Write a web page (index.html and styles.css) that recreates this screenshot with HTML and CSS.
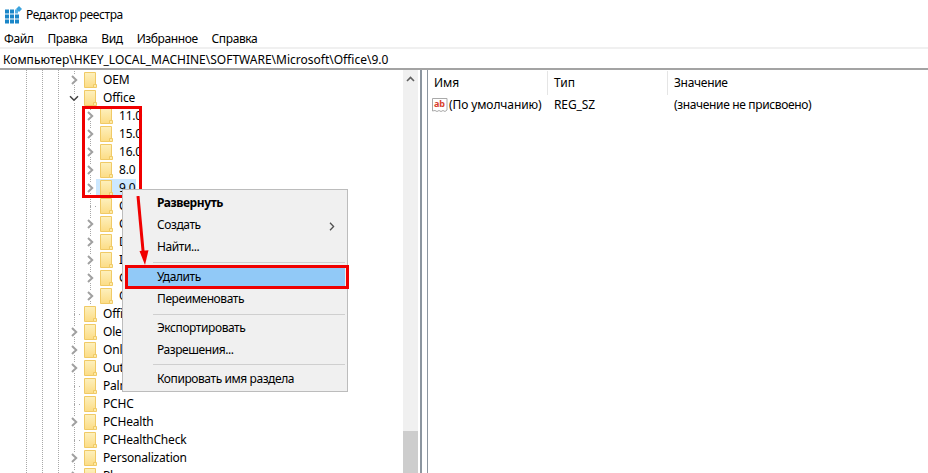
FILE: index.html
```html
<!DOCTYPE html>
<html lang="ru">
<head>
<meta charset="utf-8">
<title>Редактор реестра</title>
<link rel="stylesheet" href="styles.css">
</head>
<body>
<svg class="defs" width="0" height="0">
  <defs>
    <linearGradient id="fg" x1="0" y1="0" x2="0" y2="1">
      <stop offset="0" stop-color="#fdf0bd"/>
      <stop offset="1" stop-color="#fcdc85"/>
    </linearGradient>
    <symbol id="folder" viewBox="0 0 13 16">
      <path d="M.5.5h11v15H.5z" fill="url(#fg)" stroke="#f0ca66"/>
      <path d="M9.5 15.5v-3h3v3z" fill="#fdeaa8" stroke="#f0ca66"/>
    </symbol>
    <symbol id="chev" viewBox="0 0 7 10">
      <path d="M1 1l4.2 4L1 9" fill="none" stroke="#a0a0a0" stroke-width="2"/>
    </symbol>
    <symbol id="chevd" viewBox="0 0 10 7">
      <path d="M1 1.2l4 4 4-4" fill="none" stroke="#404040" stroke-width="1.5"/>
    </symbol>
  </defs>
</svg>
<div class="app">
  <header class="titlebar">
    <svg class="appicon" width="18" height="18" viewBox="0 0 18 18">
      <path d="M0 3.5h4v4H0zM5 3.5h4v4H5zM0 8.5h4v4H0zM5 8.5h4v4H5zM10 8.5h4v4h-4zM0 13.5h4v4H0zM5 13.5h4v4H5zM10 13.5h4v4h-4z" fill="#1a86c8"/>
      <path d="M10 3.5h3v4h-3z" fill="#56b0e4"/>
      <path d="M14 0l3 3-3 3-3-3z" fill="#3ba3de"/>
    </svg>
    <span>Редактор реестра</span>
  </header>
  <nav class="menubar">
    <span>Файл</span><span>Правка</span><span>Вид</span><span>Избранное</span><span>Справка</span>
  </nav>
  <div class="address">Компьютер\HKEY_LOCAL_MACHINE\SOFTWARE\Microsoft\Office\9.0</div>
  <main class="panes">
    <section class="treepane">
      <div class="tree">
        <div class="row l1"><svg class="chev"><use href="#chev"/></svg><svg class="folder"><use href="#folder"/></svg><span>OEM</span></div>
        <div class="row l1"><svg class="chevd"><use href="#chevd"/></svg><svg class="folder"><use href="#folder"/></svg><span>Office</span></div>
        <div class="row l2"><svg class="chev"><use href="#chev"/></svg><svg class="folder"><use href="#folder"/></svg><span>11.0</span></div>
        <div class="row l2"><svg class="chev"><use href="#chev"/></svg><svg class="folder"><use href="#folder"/></svg><span>15.0</span></div>
        <div class="row l2"><svg class="chev"><use href="#chev"/></svg><svg class="folder"><use href="#folder"/></svg><span>16.0</span></div>
        <div class="row l2"><svg class="chev"><use href="#chev"/></svg><svg class="folder"><use href="#folder"/></svg><span>8.0</span></div>
        <div class="row l2"><svg class="chev"><use href="#chev"/></svg><svg class="folder sel"><use href="#folder"/></svg><span class="seltext">9.0</span></div>
        <div class="row l2 leaf"><i class="dots"></i><svg class="folder"><use href="#folder"/></svg><span>Common</span></div>
        <div class="row l2"><svg class="chev"><use href="#chev"/></svg><svg class="folder"><use href="#folder"/></svg><span>Clients</span></div>
        <div class="row l2"><svg class="chev"><use href="#chev"/></svg><svg class="folder"><use href="#folder"/></svg><span>Delivery</span></div>
        <div class="row l2"><svg class="chev"><use href="#chev"/></svg><svg class="folder"><use href="#folder"/></svg><span>Infopath</span></div>
        <div class="row l2"><svg class="chev"><use href="#chev"/></svg><svg class="folder"><use href="#folder"/></svg><span>Groove</span></div>
        <div class="row l2"><svg class="chev"><use href="#chev"/></svg><svg class="folder"><use href="#folder"/></svg><span>Outlook</span></div>
        <div class="row l1 leaf"><i class="dots"></i><svg class="folder"><use href="#folder"/></svg><span>OfficeSoftware</span></div>
        <div class="row l1"><svg class="chev"><use href="#chev"/></svg><svg class="folder"><use href="#folder"/></svg><span>Ole</span></div>
        <div class="row l1"><svg class="chev"><use href="#chev"/></svg><svg class="folder"><use href="#folder"/></svg><span>Online</span></div>
        <div class="row l1"><svg class="chev"><use href="#chev"/></svg><svg class="folder"><use href="#folder"/></svg><span>Outlook</span></div>
        <div class="row l1 leaf"><i class="dots"></i><svg class="folder"><use href="#folder"/></svg><span>Palm</span></div>
        <div class="row l1 leaf"><i class="dots"></i><svg class="folder"><use href="#folder"/></svg><span>PCHC</span></div>
        <div class="row l1"><svg class="chev"><use href="#chev"/></svg><svg class="folder"><use href="#folder"/></svg><span>PCHealth</span></div>
        <div class="row l1 leaf"><i class="dots"></i><svg class="folder"><use href="#folder"/></svg><span>PCHealthCheck</span></div>
        <div class="row l1"><svg class="chev"><use href="#chev"/></svg><svg class="folder"><use href="#folder"/></svg><span>Personalization</span></div>
        <div class="row l1"><svg class="chev"><use href="#chev"/></svg><svg class="folder"><use href="#folder"/></svg><span>Phone</span></div>
      </div>
      <div class="scrollbar">
        <svg class="sbarrow" width="9" height="6" viewBox="0 0 9 6"><path d="M1 5l3.5-3.5L8 5" fill="none" stroke="#606060" stroke-width="1.6"/></svg>
        <div class="thumb"></div>
      </div>
    </section>
    <div class="splitter"></div>
    <section class="list">
      <div class="listhead">
        <div class="col c1">Имя</div>
        <div class="col c2">Тип</div>
        <div class="col c3">Значение</div>
      </div>
      <div class="listrow">
        <div class="c1 namecell">
          <svg class="ab" width="16" height="16" viewBox="0 0 16 16">
            <path d="M.5 1.5h14.5v11.5l-2 1.5-2-1-2 1-2-1-2 1-2-1-2.5.5z" fill="#fff" stroke="#a9a9a9"/>
            <text x="2" y="10" class="abtext">ab</text>
          </svg>
          <span>(По умолчанию)</span>
        </div>
        <div class="c2 regtype">REG_SZ</div>
        <div class="c3 regval">(значение не присвоено)</div>
      </div>
    </section>
  </main>

  <div class="redbox tree-mark"></div>
  <div class="ctx">
    <div class="ci strong">Развернуть</div>
    <div class="ci">Создать<svg class="sub" width="6" height="9" viewBox="0 0 6 9"><path d="M1 .8l3.6 3.7L1 8.2" fill="none" stroke="#505050" stroke-width="1.3"/></svg></div>
    <div class="ci short">Найти...</div>
    <div class="sep s1"></div>
    <div class="ci hot">Удалить</div>
    <div class="ci">Переименовать</div>
    <div class="sep s2"></div>
    <div class="ci">Экспортировать</div>
    <div class="ci">Разрешения...</div>
    <div class="sep s3"></div>
    <div class="ci">Копировать имя раздела</div>
  </div>
  <div class="redbox del-mark"></div>
  <svg class="arrow" width="30" height="80" viewBox="0 0 30 80">
    <path d="M7 0L12.500 60" stroke="#f00000" stroke-width="3" fill="none"/>
    <path d="M8.500 55l9-.8L14 69z" fill="#f00000"/>
  </svg>
</div>
</body>
</html>
```

FILE: styles.css
```css
* { box-sizing: border-box; }
html, body { margin: 0; height: 100%; overflow: hidden; background: #fff; }
body { font: 12px/16px "Noto Sans", sans-serif; color: #000; }
.defs { position: absolute; }
.app { position: relative; width: 928px; height: 473px; overflow: hidden; }

.titlebar { height: 28px; display: flex; align-items: center; padding: 2px 0 0 5px; gap: 3px; letter-spacing: -0.38px; }
.appicon { flex: none; }
.menubar { height: 19px; display: flex; align-items: center; gap: 14px; padding: 2px 0 0 4px; letter-spacing: -0.4px; }

.address { height: 23px; padding: 3px 0 0 3px; border-top: 2px solid #f0f0f0; border-bottom: 2px solid #a3a3a3; white-space: nowrap; line-height: 16px; }

.panes { display: flex; height: 403px; }
.treepane { width: 418px; flex: none; display: flex; overflow: hidden; }
.tree {
  flex: 1; min-width: 0; overflow: hidden; padding-top: 1px; letter-spacing: -0.2px;
  background-image:
    repeating-linear-gradient(#a8a8a8 0 1px, transparent 1px 2px),
    repeating-linear-gradient(#a8a8a8 0 1px, transparent 1px 2px),
    repeating-linear-gradient(#a8a8a8 0 1px, transparent 1px 2px);
  background-size: 1px 100%;
  background-repeat: no-repeat;
  background-position: 26px 0, 42px 0, 58px 0;
}
.row { height: 18px; display: flex; align-items: center; white-space: nowrap; position: relative; }
.row.l1 { padding-left: 71px; background: repeating-linear-gradient(#a8a8a8 0 1px, transparent 1px 2px) 74px 0 / 1px 100% no-repeat; }
.row.l2 { padding-left: 87px; background:
  repeating-linear-gradient(#a8a8a8 0 1px, transparent 1px 2px) 74px 0 / 1px 100% no-repeat,
  repeating-linear-gradient(#a8a8a8 0 1px, transparent 1px 2px) 90px 0 / 1px 100% no-repeat; }
.row svg { flex: none; }
.chev { width: 7px; height: 10px; margin: 0 6px 0 0; }
.chevd { width: 10px; height: 7px; margin: 0 5px 0 -2px; }
.row > svg.chev, .row > svg.chevd { background: #fff; }
.dots { flex: none; width: 13px; height: 1px; background: repeating-linear-gradient(90deg, transparent 0 3px, #a8a8a8 3px 4px, transparent 4px 5px); }
.folder { width: 13px; height: 16px; margin-right: 6px; }
.folder.sel { margin-right: 0; }
.row span { padding-bottom: 1px; }
.seltext { background: #cce8ff; padding: 0 0 0 6px; height: 18px; line-height: 18px; width: 23px; }
.row:has(.seltext) .folder { background: #cce8ff; height: 18px; }
.row:has(.seltext) .chev { margin-right: 2px; }
.row:has(.seltext) .folder { width: 17px; padding: 1px 0 1px 4px; }

.scrollbar { width: 15px; flex: none; background: #f0f0f0; display: flex; flex-direction: column; align-items: center; }
.sbarrow { margin-top: 6px; }
.thumb { margin-top: auto; width: 100%; height: 42px; background: #cdcdcd; }

.splitter { width: 8px; flex: none; margin-left: 2px; border-left: 2px solid #8c96a0; border-right: 1px solid #8c96a0; }
.list { flex: 1; min-width: 0; }
.listhead { display: flex; height: 25px; padding-top: 1px; }
.col { height: 24px; line-height: 24px; border-right: 1px solid #e5e5e5; }
.listrow { display: flex; height: 20px; line-height: 20px; white-space: nowrap; }
.c1 { width: 120px; padding-left: 6px; flex: none; }
.c2 { width: 120px; padding-left: 6px; flex: none; }
.c3 { padding-left: 6px; flex: 1; }
.col.c3 { border-right: 0; letter-spacing: -0.3px; }
.regtype { letter-spacing: -0.1px; }
.regval { letter-spacing: -0.35px; }
.namecell { display: flex; align-items: center; padding-left: 4px; gap: 1px; letter-spacing: -0.1px; }
.ab { flex: none; }
.abtext { font: bold 9px "Noto Sans", sans-serif; fill: #d8402c; }

.redbox { position: absolute; border: 3px solid #f00000; pointer-events: none; }
.tree-mark { left: 82px; top: 106px; width: 60px; height: 92px; }
.ctx { position: absolute; left: 122px; top: 189px; width: 226px; height: 203px; background: #f0f0f0; border: 1px solid #bcbcbc; padding: 3px 2px 0; letter-spacing: -0.42px; }
.ci { height: 22px; line-height: 20px; padding-left: 32px; position: relative; white-space: nowrap; }
.ci.short { height: 21px; }
.strong { font-weight: 700; }
.sub { position: absolute; right: 10px; top: 7px; }
.hot { background: #91c9f7; }
.sep { height: 1px; background: #cfcfcf; margin-left: 28px; }
.s1 { margin-top: 4px; margin-bottom: 4px; }
.s2 { margin-top: 3px; margin-bottom: 3px; }
.s3 { margin-top: 2px; margin-bottom: 4px; }
.del-mark { left: 125px; top: 265px; width: 224px; height: 24px; }
.arrow { position: absolute; left: 131px; top: 196px; }
```
